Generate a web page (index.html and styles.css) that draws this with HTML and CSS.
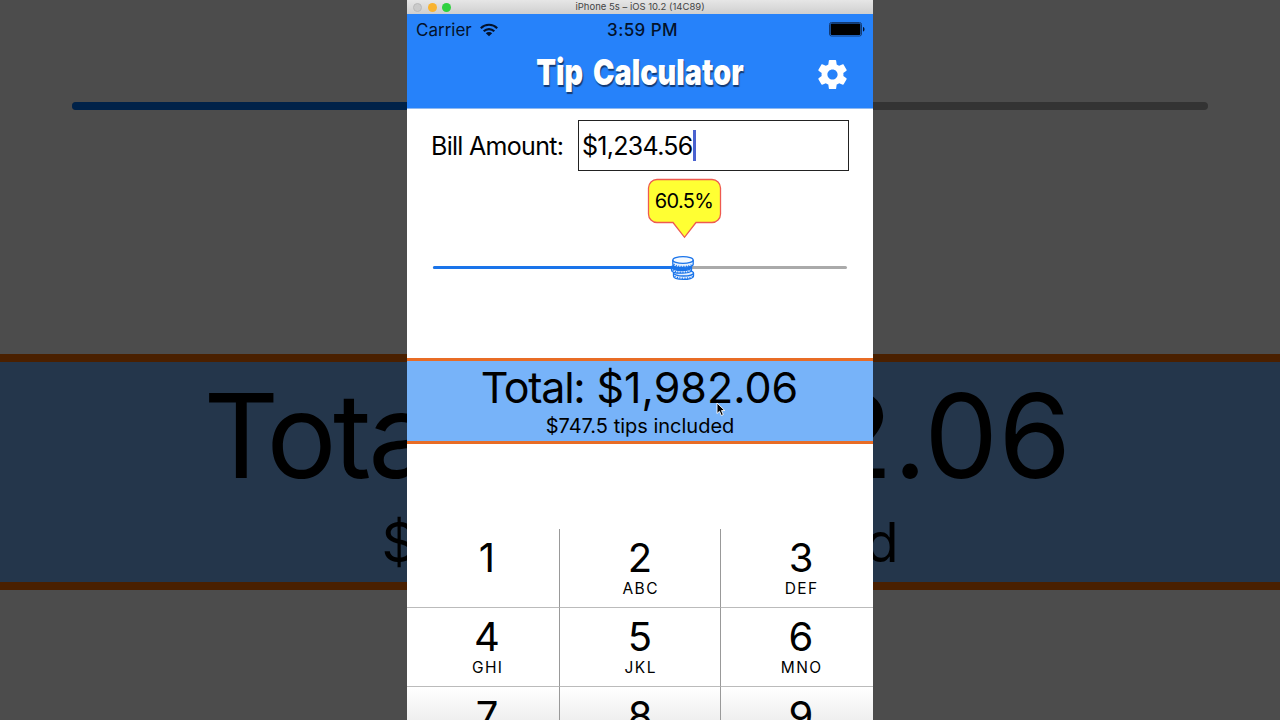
FILE: index.html
```
<!DOCTYPE html>
<html lang="en">
<head>
    <meta charset="UTF-8">
    <meta name="viewport" content="width=device-width, initial-scale=1.0">
    <title>Tip Calculator</title>
    <link rel="stylesheet" href="styles.css">
</head>
<body>
    <div class="backdrop" aria-hidden="true">
        <div class="backdrop-slider">
            <div class="backdrop-fill"></div>
        </div>
        <div class="backdrop-total">
            <div class="backdrop-amount"><span class="tight">Total:</span> <span>$1,982.06</span></div>
            <div class="backdrop-tips"><span>$747.5 tips included</span></div>
        </div>
    </div>

    <main class="phone">
        <div class="window-bar">
            <span class="dot dot-off"></span>
            <span class="dot dot-yellow"></span>
            <span class="dot dot-green"></span>
            <span class="window-title">iPhone 5s – iOS 10.2 (14C89)</span>
        </div>

        <header>
            <div class="status-bar">
                <div class="carrier">
                    <span>Carrier</span>
                    <svg width="18" height="14" viewBox="0 0 18 14">
                        <g fill="none" stroke="#03122b" stroke-width="2.1">
                            <path d="M0.8 5.2a11.6 11.6 0 0 1 16.4 0"/>
                            <path d="M3.7 8.3a7.5 7.5 0 0 1 10.6 0"/>
                        </g>
                        <path d="M9 13.2L5.8 10.2a4.6 4.6 0 0 1 6.4 0z" fill="#03122b"/>
                    </svg>
                </div>
                <div class="clock">3:59 PM</div>
                <svg class="battery" width="36" height="15" viewBox="0 0 36 15">
                    <rect x="0.5" y="0.5" width="32" height="13.5" rx="2" fill="none" stroke="#123a75"/>
                    <rect x="1.6" y="1.6" width="29.8" height="11.3" rx="1" fill="#000"/>
                    <path d="M34 5v4.6c2-.5 2-4.1 0-4.6z" fill="#03122b"/>
                </svg>
            </div>
            <div class="title-bar">
                <h1>Tip Calculator</h1>
                <svg class="gear" width="35" height="35" viewBox="0 0 24 24">
                    <path fill="#fff" d="M19.43 12.98c.04-.32.07-.64.07-.98s-.03-.66-.07-.98l2.11-1.65c.19-.15.24-.42.12-.64l-2-3.46c-.12-.22-.39-.3-.61-.22l-2.49 1c-.52-.4-1.08-.73-1.69-.98l-.38-2.65C14.46 2.18 14.25 2 14 2h-4c-.25 0-.46.18-.49.42l-.38 2.65c-.61.25-1.17.59-1.69.98l-2.49-1c-.23-.09-.49 0-.61.22l-2 3.46c-.13.22-.07.49.12.64l2.11 1.65c-.04.32-.07.65-.07.98s.03.66.07.98l-2.11 1.65c-.19.15-.24.42-.12.64l2 3.46c.12.22.39.3.61.22l2.49-1c.52.4 1.08.73 1.69.98l.38 2.65c.03.24.24.42.49.42h4c.25 0 .46-.18.49-.42l.38-2.65c.61-.25 1.17-.59 1.69-.98l2.49 1c.23.09.49 0 .61-.22l2-3.46c.12-.22.07-.49-.12-.64l-2.11-1.65zM12 15.5c-1.93 0-3.5-1.57-3.5-3.5s1.57-3.5 3.5-3.5 3.5 1.57 3.5 3.5-1.57 3.5-3.5 3.5z"/>
                </svg>
            </div>
        </header>

        <section class="bill">
            <span class="bill-label">Bill Amount:</span>
            <div class="bill-field"><span>$1,234.56</span><i class="caret"></i></div>
        </section>

        <section class="slider">
            <div class="bubble">
                <svg width="75" height="61" viewBox="0 0 75 61">
                    <path d="M10 1.5h55a8.5 8.5 0 0 1 8.5 8.5v26a8.5 8.5 0 0 1-8.5 8.5H49L37.5 59.3 26 44.5H10A8.5 8.5 0 0 1 1.5 36V10A8.5 8.5 0 0 1 10 1.5z" fill="#ffff33" stroke="#ee5a50" stroke-width="1.3"/>
                </svg>
                <span class="bubble-text">60.5%</span>
            </div>
            <div class="track">
                <div class="track-fill"></div>
                <svg class="thumb" width="26" height="26" viewBox="0 0 26 26">
                    <g fill="#e4f0ff" stroke="#1a74ea" stroke-width="1.3">
                        <path d="M3.5 18v3c0 4.5 20 4.5 20 0v-3"/>
                        <ellipse cx="13.5" cy="18" rx="10" ry="3"/>
                        <path d="M1.5 12v3c0 4.3 20 4.3 20 0v-3"/>
                        <ellipse cx="11.5" cy="12.5" rx="10" ry="3" fill="#1a74ea"/>
                        <path d="M2.8 5v4.2c0 4.3 20.4 4.3 20.4 0V5"/>
                        <ellipse cx="13" cy="5" rx="10.2" ry="3.4" fill="#f4f9ff"/>
                    </g>
                    <g fill="none" stroke="#1a74ea" stroke-width="1.6" stroke-dasharray="1 1.5">
                        <path d="M4 9c1 3.5 17 3.5 18 0"/>
                        <path d="M3 15c1 3.2 17 3.2 18 0"/>
                        <path d="M5 21c1 3 17 3 18 0"/>
                    </g>
                </svg>
            </div>
        </section>

        <section class="total">
            <div class="total-amount"><span class="tight">Total:</span> <span>$1,982.06</span></div>
            <div class="total-tips"><span>$747.5 tips included</span></div>
            <svg class="cursor" width="10" height="15" viewBox="0 0 10 15">
                <path d="M1 1v10.5l2.5-2.2 1.8 4.2 2-.9-1.8-4h3.3z" fill="#000" stroke="#fff" stroke-width=".9"/>
            </svg>
        </section>

        <section class="keypad">
            <div class="key"><b>1</b></div>
            <div class="key"><b>2</b><small>ABC</small></div>
            <div class="key"><b>3</b><small>DEF</small></div>
            <div class="key"><b>4</b><small>GHI</small></div>
            <div class="key"><b>5</b><small>JKL</small></div>
            <div class="key"><b>6</b><small>MNO</small></div>
            <div class="key"><b>7</b></div>
            <div class="key"><b>8</b></div>
            <div class="key"><b>9</b></div>
        </section>
    </main>
</body>
</html>
```
FILE: styles.css
```
* {
    box-sizing: border-box;
}

body {
    margin: 0;
    width: 1280px;
    height: 720px;
    overflow: hidden;
    display: grid;
    grid-template: 720px / 1280px;
    font-family: Inter, "Liberation Sans", sans-serif;
    color: #000;
}

span {
    white-space: nowrap;
}

svg {
    display: block;
    flex: none;
}

.tight {
    letter-spacing: -.03em;
}

/* enlarged dark copy behind the phone */
.backdrop {
    grid-area: 1 / 1;
    background: #4c4c4c;
    padding-top: 102px;
    overflow: hidden;
}

.backdrop-slider {
    height: 8px;
    margin: 0 72px;
    border-radius: 4px;
    background: #333;
    overflow: hidden;
}

.backdrop-fill {
    width: 60.5%;
    height: 8px;
    background: #002249;
}

.backdrop-total {
    height: 236px;
    margin-top: 244px;
    border-top: 8px solid #4a2000;
    border-bottom: 8px solid #4a2000;
    background: #24364b;
    display: flex;
    flex-direction: column;
    align-items: center;
}

.backdrop-amount {
    height: 146px;
    line-height: 147px;
    font-size: 117px;
    letter-spacing: .4px;
    margin-right: 5px;
}

.backdrop-tips {
    line-height: 68px;
    font-size: 55px;
    letter-spacing: -.1px;
}

/* phone */
.phone {
    grid-area: 1 / 1;
    justify-self: center;
    width: 466px;
    height: 720px;
    background: #fff;
    overflow: hidden;
    display: flex;
    flex-direction: column;
}

.window-bar {
    height: 14px;
    flex: none;
    display: grid;
    grid-template-columns: 9px 9px 9px 1fr;
    column-gap: 5.5px;
    align-items: center;
    padding-left: 6px;
    background: linear-gradient(#e6e6e6, #cfcfcf);
}

.dot {
    width: 9px;
    height: 9px;
    border-radius: 50%;
}

.dot-off {
    background: #cacaca;
    border: 1px solid #b9b9b9;
}

.dot-yellow {
    background: #f9b32f;
}

.dot-green {
    background: #2fd13f;
}

.window-title {
    padding-left: 119px;
    font-size: 9.5px;
    line-height: 14px;
    color: #444;
}

header {
    height: 95px;
    flex: none;
    background: #2682fa;
    border-bottom: 1px solid #8fb9f0;
}

.status-bar {
    height: 31px;
    display: grid;
    grid-template-columns: 1fr auto 1fr;
    align-items: center;
    padding: 0 8px 0 9px;
    font-size: 17px;
    color: #03122b;
}

.carrier {
    display: flex;
    align-items: center;
    gap: 8px;
}

.clock {
    font-weight: 550;
    letter-spacing: .4px;
    padding-left: 4px;
}

.battery {
    justify-self: end;
}

.title-bar {
    height: 59px;
    display: grid;
    grid-template-columns: 1fr auto 1fr;
    align-items: center;
}

h1 {
    grid-column: 2;
    margin: 0 0 5px;
    width: 210px;
    display: flex;
    justify-content: center;
    white-space: nowrap;
    font-size: 36px;
    line-height: 54px;
    font-weight: 900;
    word-spacing: 5px;
    color: #fff;
    text-shadow: 1px 2px 1px #123a75;
    transform: scaleX(.8);
}

.gear {
    justify-self: end;
    margin-right: 23px;
}

.bill {
    height: 62px;
    flex: none;
    padding: 11px 24px 0;
    display: flex;
    justify-content: space-between;
    align-items: center;
    font-size: 25px;
    letter-spacing: -.7px;
}

.bill-field {
    width: 271px;
    height: 51px;
    border: 1px solid #222;
    padding-left: 3px;
    display: flex;
    align-items: center;
}

.caret {
    width: 3px;
    height: 31px;
    background: #4a62d0;
}

.slider {
    height: 187px;
    flex: none;
    padding: 7px 26px 0;
}

.bubble {
    width: 75px;
    height: 61px;
    margin-left: 213.5px;
    display: grid;
}

.bubble svg {
    grid-area: 1 / 1;
}

.bubble-text {
    grid-area: 1 / 1;
    text-align: center;
    font-size: 20px;
    letter-spacing: -.7px;
    line-height: 47px;
}

.track {
    height: 3px;
    margin-top: 27px;
    border-radius: 2px;
    background: #aaa;
    display: flex;
    align-items: center;
}

.track-fill {
    width: 240px;
    height: 3px;
    border-radius: 2px;
    background: #1a74ea;
}

.thumb {
    margin-left: -3px;
}

.total {
    position: relative;
    height: 86px;
    flex: none;
    border-top: 3px solid #e86c25;
    border-bottom: 3px solid #e86c25;
    background: #77b3f9;
    display: flex;
    flex-direction: column;
    align-items: center;
}

.total-amount {
    height: 53px;
    line-height: 53px;
    font-size: 43px;
    margin-right: 1px;
}

.total-tips {
    line-height: 25px;
    font-size: 20px;
}

/* mouse pointer over the total */
.cursor {
    position: absolute;
    left: 309px;
    top: 41px;
}

.keypad {
    flex: none;
    margin-top: 85px;
    display: grid;
    grid-template-columns: 153px 161px 152px;
    grid-auto-rows: 79px;
}

.key {
    border-right: 1px solid #999;
    border-bottom: 1px solid #bbb;
    display: flex;
    flex-direction: column;
    align-items: center;
    padding-top: 5px;
}

.key:nth-child(3n + 1),
.key:nth-child(3n) {
    padding-left: 8px;
}

.key:nth-child(3n) {
    border-right: 0;
}

.key:nth-child(n + 7) {
    background: linear-gradient(#fff, #eee 34px);
}

.key b {
    font-weight: 400;
    font-size: 40px;
    line-height: 48px;
}

.key small {
    font-size: 15.5px;
    line-height: 14px;
    letter-spacing: 1.4px;
    margin-right: -1.4px;
}
```
